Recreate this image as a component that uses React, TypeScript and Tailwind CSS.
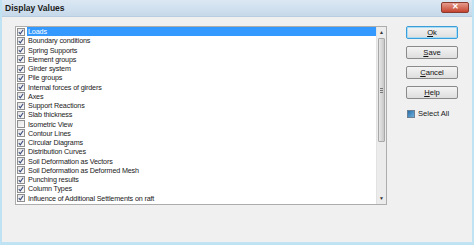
import React from "react";

const items: { label: string; checked: boolean }[] = [
  { label: "Loads", checked: true },
  { label: "Boundary conditions", checked: true },
  { label: "Spring Supports", checked: true },
  { label: "Element groups", checked: true },
  { label: "Girder system", checked: true },
  { label: "Pile groups", checked: true },
  { label: "Internal forces of girders", checked: true },
  { label: "Axes", checked: true },
  { label: "Support Reactions", checked: true },
  { label: "Slab thickness", checked: true },
  { label: "Isometric View", checked: false },
  { label: "Contour Lines", checked: true },
  { label: "Circular Diagrams", checked: true },
  { label: "Distribution Curves", checked: true },
  { label: "Soil Deformation as Vectors", checked: true },
  { label: "Soil Deformation as Deformed Mesh", checked: true },
  { label: "Punching results", checked: true },
  { label: "Column Types", checked: true },
  { label: "Influence of Additional Settlements on raft", checked: true },
];

const Check = ({ checked }: { checked: boolean }) => (
  <div className="w-[8px] h-[8px] shrink-0 border border-[#8f8f8f] bg-gradient-to-br from-[#e4e4e4] to-[#fafafa] flex items-center justify-center">
    {checked && (
      <svg width="6" height="6" viewBox="0 0 6 6">
        <path d="M0.8 3.2 L2.3 4.8 L5.2 0.8" stroke="#3a4a7a" strokeWidth="1.1" fill="none" />
      </svg>
    )}
  </div>
);

const Btn = ({ children, primary }: { children: React.ReactNode; primary?: boolean }) => (
  <button
    className={`w-[52px] h-[13px] rounded-[2px] text-[7.6px] leading-none text-[#111] bg-gradient-to-b from-[#f4f4f4] to-[#dedede] border ${
      primary ? "border-[#3c9ed8] shadow-[inset_0_0_0_1px_#a9dcf5]" : "border-[#8a8a8a]"
    }`}
  >
    {children}
  </button>
);

export default function App() {
  return (
    <div
      className="w-[474px] h-[245px] flex flex-col bg-[#bfe3f2] px-[2px] pb-[3px]"
      style={{ fontFamily: '"Liberation Sans", Arial, sans-serif' }}
    >
      <div className="h-[16px] shrink-0 flex items-center justify-between bg-gradient-to-b from-[#dbe8f3] to-[#c6d9ea] pl-[3px] pr-[3px]">
        <span className="text-[8.5px] font-semibold text-[#1a1a1a]">Display Values</span>
        <div className="w-[28px] h-[11px] mt-[-2px] rounded-[2px] bg-gradient-to-b from-[#e59a8c] to-[#c4422e] border border-[#8a3b30] flex items-center justify-center">
          <span className="text-white text-[8px] font-bold leading-none">✕</span>
        </div>
      </div>
      <div className="flex-1 bg-[#f0f0f0] flex pt-[9px] pl-[13px] border-t border-[#b9cde0]">
        <div className="w-[372px] h-[179px] bg-white border border-[#adadad] flex">
          <div className="flex-1 flex flex-col">
            {items.map((it, i) => (
              <div key={i} className="h-[9.26px] flex items-center pl-[1px]">
                <Check checked={it.checked} />
                <span
                  className={`ml-[2px] pl-[1px] h-[9px] flex items-center text-[7.2px] tracking-[-0.15px] leading-none whitespace-nowrap ${
                    i === 0 ? "bg-[#3399ff] text-white flex-1" : "text-[#1a1a1a]"
                  }`}
                >
                  {it.label}
                </span>
              </div>
            ))}
          </div>
          <div className="w-[10px] flex flex-col bg-[#ececec] border-l border-[#e2e2e2]">
            <div className="h-[11px] flex items-center justify-center text-[5px] text-[#333]">▲</div>
            <div className="h-[104px] mx-[1px] rounded-[1px] border border-[#a8a8a8] bg-gradient-to-r from-[#e8e8e8] via-[#d8d8d8] to-[#c8c8c8] flex items-center justify-center">
              <div className="flex flex-col gap-[1px]">
                <div className="w-[3px] h-px bg-[#777]" />
                <div className="w-[3px] h-px bg-[#777]" />
                <div className="w-[3px] h-px bg-[#777]" />
              </div>
            </div>
            <div className="flex-1" />
            <div className="h-[11px] flex items-center justify-center text-[5px] text-[#333]">▼</div>
          </div>
        </div>
        <div className="ml-[19px] flex flex-col gap-[7px]">
          <Btn primary>
            <span className="underline">O</span>k
          </Btn>
          <Btn>
            <span className="underline">S</span>ave
          </Btn>
          <Btn>
            <span className="underline">C</span>ancel
          </Btn>
          <Btn>
            <span className="underline">H</span>elp
          </Btn>
          <div className="flex items-center mt-[2px] pl-[1px]">
            <div className="w-[8px] h-[8px] border border-[#6c7f93] bg-gradient-to-br from-[#2a6fa8] to-[#6db0dd]" />
            <span className="ml-[3px] text-[7.6px] text-[#1a1a1a]">Select All</span>
          </div>
        </div>
      </div>
    </div>
  );
}
